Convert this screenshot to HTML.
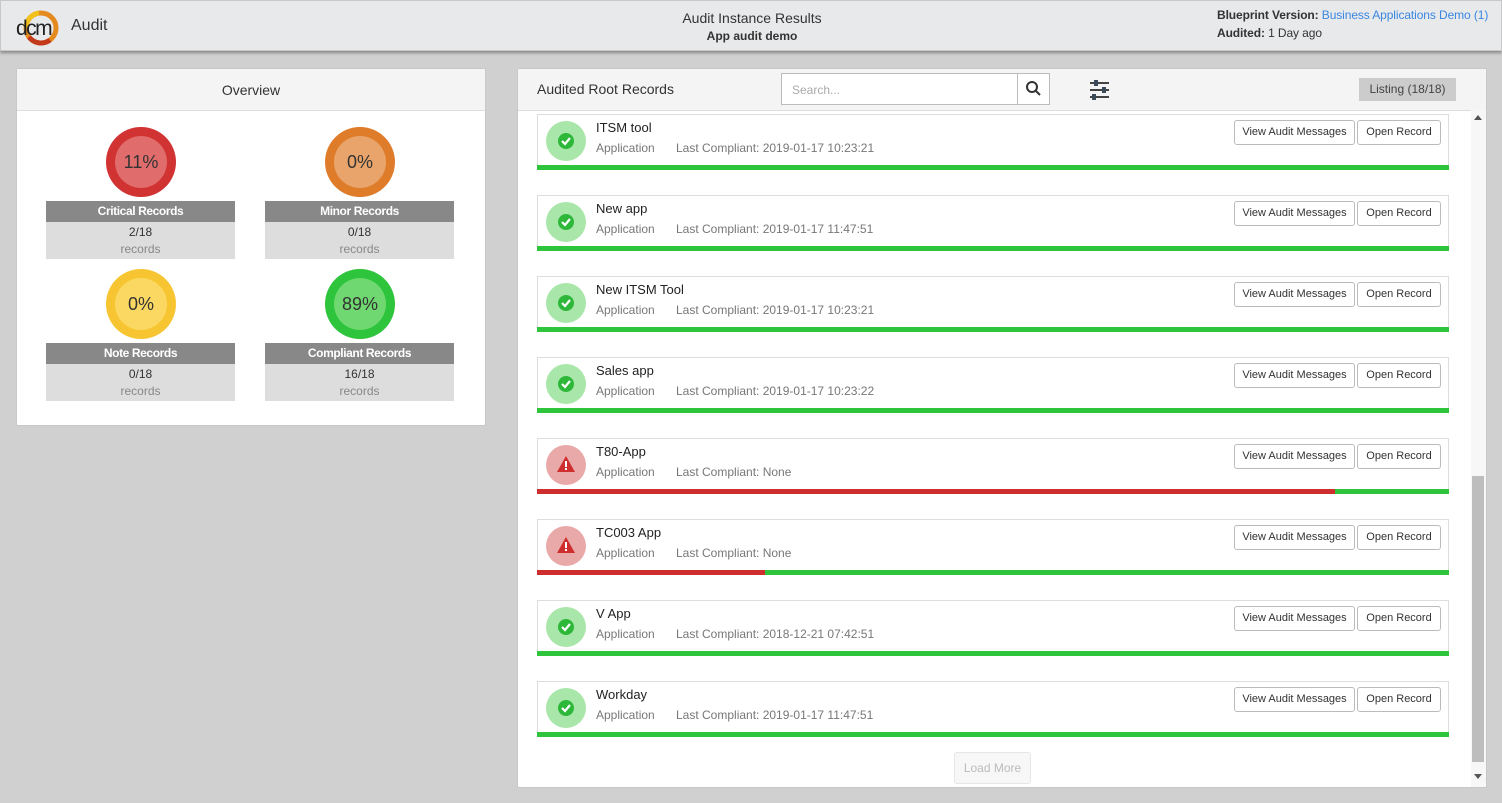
<!DOCTYPE html>
<html><head><style>
*{box-sizing:border-box;margin:0;padding:0}
body{width:1502px;height:803px;background:#d0d0d0;font-family:"Liberation Sans",sans-serif;position:relative;overflow:hidden;color:#333}
.abs{position:absolute}
#hdr{left:0;top:0;width:1502px;height:51px;background:#e8e9eb;border:1px solid #c8c8c8;box-shadow:0 2px 3px rgba(0,0,0,.35)}
.panel{background:#fff;border:1px solid #c8c8c8;border-radius:2px}
.ph{background:#f4f4f4;border-bottom:1px solid #ddd;height:42px}
.circ{width:70px;height:70px;border-radius:50%;display:flex;align-items:center;justify-content:center;font-size:18px;color:#333}
.circ span{width:52px;height:52px;border-radius:50%;display:flex;align-items:center;justify-content:center}
.lbl{width:189px;height:21px;background:#888;color:#fff;font-size:12px;font-weight:bold;text-align:center;line-height:21px;letter-spacing:-.4px}
.cnt{width:189px;height:37px;background:#ddd;text-align:center;font-size:12px;line-height:17px;padding-top:2px}
.cnt i{font-style:normal;color:#888}
.card{left:537px;width:912px;height:56px;background:#fff;border:1px solid #ddd;border-bottom:none}
.card .ic{position:absolute;left:8px;top:6px;width:40px;height:40px;border-radius:50%}
.card .nm{position:absolute;left:58px;top:5px;font-size:13px;color:#222}
.card .sb{position:absolute;left:58px;top:26px;font-size:12px;color:#777}
.card .sb b{font-weight:normal;position:absolute;left:80px;white-space:nowrap}
.card .bar{position:absolute;left:-1px;right:-1px;bottom:0;height:5px;background:#2ec43b}
.btn{position:absolute;top:5px;height:25px;border:1px solid #bbb;border-radius:3px;background:#fff;font-size:11px;line-height:23px;text-align:center;color:#333}
</style></head><body>
<div id="hdr" class="abs">
  <svg class="abs" style="left:14px;top:8px" width="50" height="38" viewBox="0 0 50 38">
    <circle cx="26" cy="19" r="15" fill="none" stroke="#e58a1f" stroke-width="5"/>
    <path d="M11 19 A15 15 0 0 1 24 4" fill="none" stroke="#f3c11b" stroke-width="5"/>
    <path d="M35 31 A15 15 0 0 1 14 28" fill="none" stroke="#c2391b" stroke-width="5"/>
    <text x="1" y="26" font-family="Liberation Sans" font-size="21" fill="#222" letter-spacing="-1.5">dcm</text>
  </svg>
  <div class="abs" style="left:70px;top:16px;font-size:16px;color:#333">Audit</div>
  <div class="abs" style="left:0;width:1502px;top:9px;text-align:center;font-size:14px;color:#333">Audit Instance Results</div>
  <div class="abs" style="left:0;width:1502px;top:28px;text-align:center;font-size:12px;font-weight:bold;color:#333">App audit demo</div>
  <div class="abs" style="left:1216px;top:7px;font-size:12px;white-space:nowrap;letter-spacing:-.1px"><b>Blueprint Version:</b> <span style="color:#3a86e0">Business Applications Demo (1)</span></div>
  <div class="abs" style="left:1216px;top:25px;font-size:12px;letter-spacing:-.1px"><b>Audited:</b> 1 Day ago</div>
</div>

<div class="abs panel" style="left:16px;top:68px;width:470px;height:358px">
  <div class="ph" style="text-align:center;line-height:42px;font-size:14px;color:#333">Overview</div>
</div>
<div class="abs circ" style="left:106px;top:127px;background:#d13232"><span style="background:#e06c6c">11%</span></div>
<div class="abs circ" style="left:325px;top:127px;background:#df7c2a"><span style="background:#e8a46a">0%</span></div>
<div class="abs circ" style="left:106px;top:269px;background:#f7c531"><span style="background:#fbd861">0%</span></div>
<div class="abs circ" style="left:325px;top:269px;background:#2ec43b"><span style="background:#6fd870">89%</span></div>
<div class="abs lbl" style="left:46px;top:201px">Critical Records</div>
<div class="abs cnt" style="left:46px;top:222px">2/18<br><i>records</i></div>
<div class="abs lbl" style="left:265px;top:201px">Minor Records</div>
<div class="abs cnt" style="left:265px;top:222px">0/18<br><i>records</i></div>
<div class="abs lbl" style="left:46px;top:343px">Note Records</div>
<div class="abs cnt" style="left:46px;top:364px">0/18<br><i>records</i></div>
<div class="abs lbl" style="left:265px;top:343px">Compliant Records</div>
<div class="abs cnt" style="left:265px;top:364px">16/18<br><i>records</i></div>

<div class="abs panel" style="left:517px;top:68px;width:970px;height:720px">
  <div class="ph"></div>
</div>
<div class="abs" style="left:537px;top:81px;font-size:14px;color:#333">Audited Root Records</div>
<div class="abs" style="left:781px;top:73px;width:237px;height:32px;border:1px solid #bbb;background:#fff;font-size:12px;color:#aaa;padding:9px 10px">Search...</div>
<div class="abs" style="left:1017px;top:73px;width:33px;height:32px;border:1px solid #bbb;background:#fff">
  <svg width="31" height="30"><circle cx="14" cy="13" r="5" fill="none" stroke="#333" stroke-width="2"/><line x1="18" y1="17" x2="22" y2="21" stroke="#333" stroke-width="2"/></svg>
</div>
<svg class="abs" style="left:1088px;top:79px" width="24" height="22">
  <g stroke="#444" stroke-width="2"><line x1="2" y1="4" x2="21" y2="4"/><line x1="2" y1="11" x2="21" y2="11"/><line x1="2" y1="18" x2="21" y2="18"/></g>
  <g fill="#3a4a5a"><rect x="6" y="1" width="4" height="6"/><rect x="14" y="8" width="4" height="6"/><rect x="4" y="15" width="4" height="6"/></g>
</svg>
<div class="abs" style="left:1359px;top:78px;width:97px;height:23px;background:#ccc;font-size:12px;line-height:23px;text-align:center;color:#444">Listing (18/18)</div>

<div class="abs" style="left:1471px;top:110px;width:15px;height:677px;background:#f7f7f7"></div>
<div class="abs" style="left:1472px;top:476px;width:12px;height:286px;background:#bdbdbd"></div>
<div class="abs" style="left:1474px;top:115px;width:0;height:0;border-left:4px solid transparent;border-right:4px solid transparent;border-bottom:5px solid #555"></div>
<div class="abs" style="left:1474px;top:774px;width:0;height:0;border-left:4px solid transparent;border-right:4px solid transparent;border-top:5px solid #555"></div>

<div id="list"></div>
<div class="abs" style="left:954px;top:752px;width:77px;height:32px;border:1px solid #e6e6e6;border-radius:3px;background:#f7f7f7;color:#bbb;font-size:12px;line-height:30px;text-align:center">Load More</div>

<script>
var rows=[["ITSM tool","2019-01-17 10:23:21",0],["New app","2019-01-17 11:47:51",0],["New ITSM Tool","2019-01-17 10:23:21",0],["Sales app","2019-01-17 10:23:22",0],["T80-App","None",1335],["TC003 App","None",765],["V App","2018-12-21 07:42:51",0],["Workday","2019-01-17 11:47:51",0]];
var ok='<svg width="40" height="40"><circle cx="20" cy="20" r="20" fill="#a9e6a9"/><circle cx="20" cy="20" r="8" fill="#2eb83a"/><path d="M16 20l3 3 5-6" stroke="#fff" stroke-width="2.2" fill="none"/></svg>';
var bad='<svg width="40" height="40"><circle cx="20" cy="20" r="20" fill="#eaa9a9"/><path d="M20 11L29 27H11Z" fill="#cf2e2e"/><rect x="19" y="16" width="2" height="6" fill="#fff"/><rect x="19" y="23" width="2" height="2" fill="#fff"/></svg>';
var h='';
rows.forEach(function(r,i){var t=114+81*i;
var bar=r[2]?'<div class="bar" style="background:linear-gradient(to right,#cf2e2e '+(r[2]-537)+'px,#2ec43b '+(r[2]-537)+'px)"></div>':'<div class="bar"></div>';
h+='<div class="abs card" style="top:'+t+'px"><div class="ic">'+(r[2]?bad:ok)+'</div><div class="nm">'+r[0]+'</div><div class="sb">Application<b>Last Compliant: '+r[1]+'</b></div><div class="btn" style="left:696px;width:121px">View Audit Messages</div><div class="btn" style="left:819px;width:84px">Open Record</div>'+bar+'</div>';});
document.getElementById('list').innerHTML=h;
</script>
</body></html>
